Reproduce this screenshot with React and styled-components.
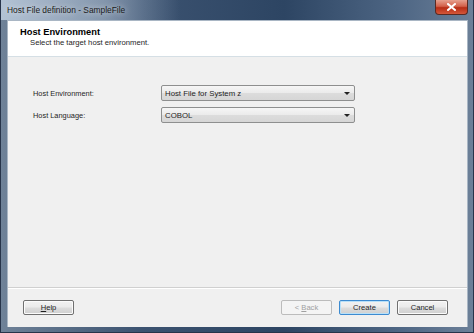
import React from 'react'
import styled, { createGlobalStyle } from 'styled-components'

const GlobalStyle = createGlobalStyle`
  html, body {
    margin: 0;
    padding: 0;
    width: 474px;
    height: 333px;
    overflow: hidden;
    font-family: "Liberation Sans", Arial, sans-serif;
  }
`

function App() {
  return (
    <>
      <GlobalStyle />
      <Window>
        <TitleBar>
          <Title>Host File definition - SampleFile</Title>
          <CloseButton>
            <svg width="9" height="8" viewBox="0 0 9 8">
              <path d="M1 1 L8 7 M8 1 L1 7" stroke="#fff" strokeWidth="2" strokeLinecap="square" />
            </svg>
          </CloseButton>
        </TitleBar>
        <Client>
          <Header>
            <HeaderTitle>Host Environment</HeaderTitle>
            <HeaderText>Select the target host environment.</HeaderText>
          </Header>
          <Body>
            <FormGrid>
              <Label>Ho<u>s</u>t Environment:</Label>
              <Select>
                <span>Host File for System z</span>
                <Arrow />
              </Select>
              <Label>Ho<u>s</u>t Language:</Label>
              <Select>
                <span>COBOL</span>
                <Arrow />
              </Select>
            </FormGrid>
          </Body>
          <Footer>
            <Button><u>H</u>elp</Button>
            <Spacer />
            <Button disabled>&lt; <u>B</u>ack</Button>
            <Button $primary>Create</Button>
            <Button>Cancel</Button>
          </Footer>
        </Client>
      </Window>
    </>
  )
}

export default App

const Window = styled.div`
  width: 474px;
  height: 333px;
  box-sizing: border-box;
  padding: 0 5px 5px 6px;
  display: flex;
  flex-direction: column;
  background: linear-gradient(90deg, #6f8298 0%, #3b5270 30%, #2d4563 60%, #4f6785 85%, #6c8098 100%);
  border-left: 1px solid #27344a;
  border-right: 1px solid #27344a;
  border-bottom: 1px solid #27344a;
`

const TitleBar = styled.div`
  height: 20px;
  display: flex;
  align-items: center;
  position: relative;
  background: linear-gradient(90deg, rgba(190, 205, 222, 0.85) 0%, rgba(170, 186, 205, 0.6) 22%, rgba(60, 85, 115, 0) 38%);
  margin: 0 -5px 0 -6px;
  padding-left: 6px;
`

const Title = styled.div`
  font-size: 8.4px;
  color: #1b1b1b;
  text-shadow: 0 0 6px rgba(255, 255, 255, 0.8);
`

const CloseButton = styled.div`
  position: absolute;
  right: 5px;
  top: 0;
  width: 33px;
  height: 15px;
  display: flex;
  align-items: center;
  justify-content: center;
  border: 1px solid #5a2a22;
  border-top: none;
  border-radius: 0 0 4px 4px;
  box-sizing: border-box;
  background: linear-gradient(180deg, #e6a08e 0%, #d3614a 45%, #b72d15 55%, #d4583b 100%);
`

const Client = styled.div`
  flex: 1;
  display: flex;
  flex-direction: column;
  background: #f0f0f0;
  border: 1px solid #a9b6c4;
  border-bottom: none;
`

const Header = styled.div`
  height: 36px;
  box-sizing: border-box;
  background: #ffffff;
  border-bottom: 1px solid #d5dfe5;
  padding: 6px 0 0 12px;
`

const HeaderTitle = styled.div`
  font-size: 9.3px;
  font-weight: bold;
  color: #000;
  line-height: 11px;
`

const HeaderText = styled.div`
  font-size: 7.7px;
  color: #1e1e1e;
  line-height: 10px;
  padding-left: 10px;
`

const Body = styled.div`
  flex: 1;
  padding: 28px 0 0 25px;
`

const FormGrid = styled.div`
  display: grid;
  grid-template-columns: 128px 194px;
  row-gap: 6px;
  align-items: center;
`

const Label = styled.div`
  font-size: 7.4px;
  color: #1e1e1e;

  u {
    text-decoration: none;
  }
`

const Select = styled.div`
  height: 16px;
  box-sizing: border-box;
  display: flex;
  align-items: center;
  justify-content: space-between;
  padding: 0 4px 0 3px;
  border: 1px solid #8e8f8f;
  border-radius: 2px;
  background: linear-gradient(180deg, #f6f6f6 0%, #ebebeb 48%, #dcdcdc 52%, #d6d6d6 100%);
  font-size: 7.8px;
  color: #1e1e1e;
`

const Arrow = styled.span`
  width: 0;
  height: 0;
  border-left: 3px solid transparent;
  border-right: 3px solid transparent;
  border-top: 3px solid #222;
`

const Footer = styled.div`
  height: 40px;
  box-sizing: border-box;
  border-top: 1px solid #d0d0d0;
  box-shadow: inset 0 1px 0 #ffffff;
  display: flex;
  align-items: flex-start;
  padding: 12px 19px 0 15px;
  gap: 7px;
`

const Spacer = styled.div`
  flex: 1;
`

const Button = styled.button`
  width: 51px;
  height: 15px;
  box-sizing: border-box;
  padding: 0;
  margin: 0;
  font-family: inherit;
  font-size: 7.6px;
  color: #1e1e1e;
  border: 1px solid ${p => (p.$primary ? '#3c8ad0' : '#707070')};
  border-radius: 2px;
  background: linear-gradient(180deg, #f2f2f2 0%, #ebebeb 48%, #dddddd 52%, #cfcfcf 100%);
  box-shadow: inset 0 0 0 1px ${p => (p.$primary ? '#b8e0f8' : '#fbfbfb')};

  &:disabled {
    color: #a0a0a0;
    border-color: #bcbcbc;
    background: #f4f4f4;
    box-shadow: none;
  }

  u {
    text-decoration: underline;
  }
`
